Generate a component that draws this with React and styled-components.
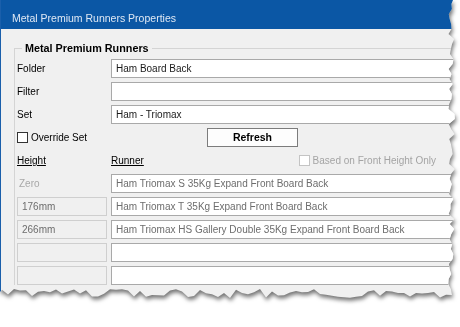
import styled, { createGlobalStyle } from "styled-components";

const GlobalStyle = createGlobalStyle`
  html, body {
    margin: 0;
    padding: 0;
    background: #ffffff;
  }
  body {
    font-family: "Liberation Sans", Arial, sans-serif;
    font-size: 10px;
  }
`;

// torn paper edge along the right and bottom of the window
const makeTornEdge = () => {
  let seed = 7;
  const rnd = () => {
    seed = (seed * 9301 + 49297) % 233280;
    return seed / 233280;
  };
  const pts = ["0px 0px", "453px 0px"];
  for (let y = 4; y < 294; y += 5) {
    pts.push(`${(448 + rnd() * 7).toFixed(1)}px ${y}px`);
  }
  for (let x = 452; x > 0; x -= 6) {
    pts.push(`${x}px ${(289 + rnd() * 9).toFixed(1)}px`);
  }
  pts.push("0px 292px");
  return `polygon(${pts.join(", ")})`;
};

const TORN = makeTornEdge();

const Page = styled.div`
  width: 460px;
  height: 327px;
  overflow: hidden;
  filter: drop-shadow(1px 3px 2px rgba(0, 0, 0, 0.55));
`;

const Window = styled.div`
  width: 458px;
  height: 302px;
  background: #f0f0f0;
  border-left: 1px solid #1a5fab;
  box-sizing: border-box;
  clip-path: ${TORN};
  display: flex;
  flex-direction: column;
  overflow: hidden;
`;

const TitleBar = styled.div`
  height: 29px;
  flex-shrink: 0;
  background: #0b57a5;
  color: #dfe8f4;
  font-family: "Liberation Sans", Arial, sans-serif;
  font-size: 10.5px;
  display: flex;
  align-items: center;
  padding-left: 11px;
  padding-top: 6px;
  box-sizing: border-box;
`;

const Group = styled.fieldset`
  margin: 13px 0 0 13px;
  padding: 5px 0 0 2px;
  width: 520px;
  border: 1px solid #d4d4d4;
  border-right: none;
  border-bottom: none;
  min-width: 0;
`;

const Legend = styled.legend`
  font-family: "Liberation Sans", Arial, sans-serif;
  font-weight: bold;
  font-size: 10.8px;
  color: #000;
  padding: 0 3px;
  margin-left: 5px;
`;

const Form = styled.div`
  display: grid;
  grid-template-columns: 90px 345px;
  grid-auto-rows: 19px;
  column-gap: 4px;
  row-gap: 4px;
`;

const Label = styled.div`
  display: flex;
  align-items: center;
  color: #000;
  text-decoration: ${(p) => (p.$underline ? "underline" : "none")};
`;

const TextBox = styled.div`
  box-sizing: border-box;
  height: 19px;
  border: 1px solid ${(p) => (p.$disabled ? "#cfcfcf" : "#a9a9a9")};
  background: ${(p) => (p.$disabled ? "#f0f0f0" : "#ffffff")};
  color: ${(p) => (p.$muted ? "#6d6d6d" : "#1a1a1a")};
  display: flex;
  align-items: center;
  padding: 0 4px 1px;
  white-space: nowrap;
  overflow: hidden;
`;

const PlainValue = styled.div`
  display: flex;
  align-items: center;
  padding: 0 2px 1px;
  color: #a8a8a8;
`;

const CheckRow = styled.label`
  display: flex;
  align-items: center;
  gap: 3px;
  color: ${(p) => (p.$disabled ? "#a4a4a4" : "#000")};
  white-space: nowrap;
`;

const Box = styled.span`
  width: 11px;
  height: 11px;
  box-sizing: border-box;
  border: 1px solid ${(p) => (p.$disabled ? "#c4c4c4" : "#333")};
  background: #fff;
  display: inline-block;
  flex-shrink: 0;
`;

const ButtonCell = styled.div`
  display: flex;
  align-items: stretch;
  padding-left: 96px;
`;

const Button = styled.div`
  width: 91px;
  box-sizing: border-box;
  border: 1px solid #7c7c7c;
  background: #fdfdfd;
  font-weight: bold;
  font-size: 10.5px;
  color: #000;
  display: flex;
  align-items: center;
  justify-content: center;
  padding-bottom: 1px;
`;

const HeaderCell = styled.div`
  display: flex;
  align-items: center;
  justify-content: space-between;
  padding-right: 20px;
`;

const Underlined = styled.span`
  text-decoration: underline;
  color: #000;
`;

const rows = [
  { height: "Zero", plain: true, runner: "Ham Triomax S 35Kg Expand Front Board Back" },
  { height: "176mm", runner: "Ham Triomax T 35Kg Expand Front Board Back" },
  { height: "266mm", runner: "Ham Triomax HS Gallery Double 35Kg Expand Front Board Back" },
  { height: "", runner: "" },
  { height: "", runner: "" },
];

const App = () => {
  return (
    <Page>
      <GlobalStyle />
      <Window>
        <TitleBar>Metal Premium Runners Properties</TitleBar>
        <Group>
          <Legend>Metal Premium Runners</Legend>
          <Form>
            <Label>Folder</Label>
            <TextBox>Ham Board Back</TextBox>

            <Label>Filter</Label>
            <TextBox />

            <Label>Set</Label>
            <TextBox>Ham - Triomax</TextBox>

            <CheckRow>
              <Box />
              Override Set
            </CheckRow>
            <ButtonCell>
              <Button>Refresh</Button>
            </ButtonCell>

            <Label $underline>Height</Label>
            <HeaderCell>
              <Underlined>Runner</Underlined>
              <CheckRow $disabled>
                <Box $disabled />
                Based on Front Height Only
              </CheckRow>
            </HeaderCell>

            {rows.map((r, i) =>
              [
                r.plain ? (
                  <PlainValue key={`h${i}`}>{r.height}</PlainValue>
                ) : (
                  <TextBox key={`h${i}`} $disabled $muted>
                    {r.height}
                  </TextBox>
                ),
                <TextBox key={`r${i}`} $muted>
                  {r.runner}
                </TextBox>,
              ]
            )}
          </Form>
        </Group>
      </Window>
    </Page>
  );
};

export default App;
